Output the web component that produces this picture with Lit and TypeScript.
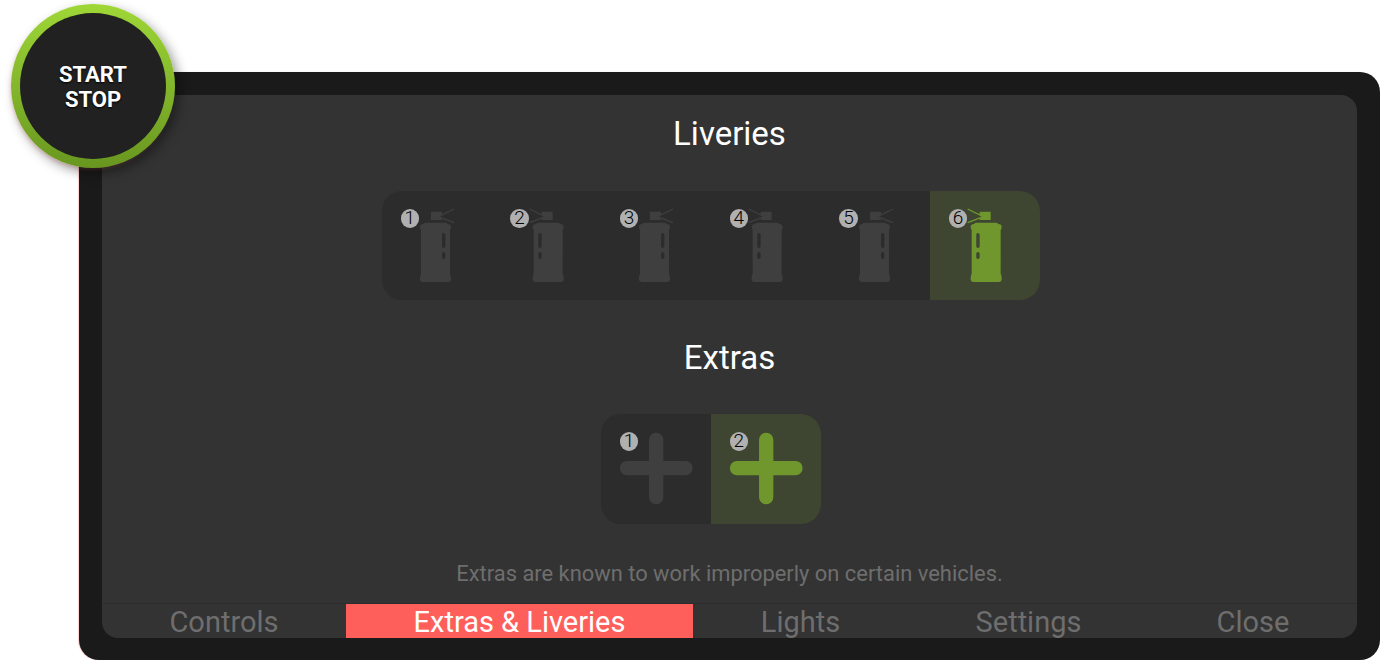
import { LitElement, html, css, svg } from "lit";
import { customElement } from "lit/decorators.js";

const can = (flip: boolean) => svg`
  <g transform=${flip ? "translate(109.67 0) scale(-1 1)" : ""}>
    <path class="fill" d="M49 20.700h11v3l-3 2 3 2v1.300h-11z"/>
    <path class="line" d="M56.500 25.700 72 18M56.500 25.700 72 31.700"/>
    <path class="fill" fill-rule="evenodd" d="M44 31.700H63Q65 31.700 65.500 33Q69 33 69 36Q69 38 68 39V83Q69 84 69 87V88Q69 91 66 91H41Q38 91 38 88V87Q38 84 39 83V39Q38 38 38 36Q38 33 41.500 33Q42 31.700 44 31.700ZM61.700 42a1.700 1.700 0 0 0-1.700 1.700v11.600a1.700 1.700 0 0 0 3.400 0v-11.600a1.700 1.700 0 0 0-1.700-1.700zM61.700 61a1.700 1.700 0 0 0-1.700 1.700v3.600a1.700 1.700 0 0 0 3.400 0v-3.600a1.700 1.700 0 0 0-1.700-1.700z"/>
  </g>`;

const plus = svg`<path class="fill" d="M55.200 18.700a7.150 7.150 0 0 1 7.150 7.150V47H84.500a7.150 7.150 0 0 1 0 14.300H62.350v21.850a7.150 7.150 0 0 1-14.300 0V61.300H26a7.150 7.150 0 0 1 0-14.300H48.050V25.850a7.150 7.150 0 0 1 7.150-7.150z"/>`;

const TABS = [
  { label: "Controls", width: 244 },
  { label: "Extras & Liveries", width: 347, active: true },
  { label: "Lights", width: 215 },
  { label: "Settings", width: 241 },
  { label: "Close", width: 208 },
];

@customElement("app-root")
export class AppRoot extends LitElement {
  static styles = css`
    :host {
      display: block;
      position: relative;
      width: 1380px;
      height: 660px;
      padding: 72px 0 0 79px;
      box-sizing: border-box;
      background: #fff;
      font-family: Roboto, "Liberation Sans", sans-serif;
      overflow: hidden;
    }
    .frame {
      width: 1301px;
      height: 588px;
      box-sizing: border-box;
      padding: 23px 23px 22px 23px;
      background: #1a1a1a;
      border-radius: 20px;
      box-shadow: -1px 0 1px rgba(255, 120, 120, 0.35);
    }
    .panel {
      height: 100%;
      display: flex;
      flex-direction: column;
      align-items: center;
      background: #333;
      border-radius: 16px;
      overflow: hidden;
    }
    h2 {
      margin: 0;
      font-size: 33px;
      font-weight: 400;
      line-height: 36px;
      color: #fff;
    }
    .t1 { margin-top: 21px; }
    .t2 { margin-top: 40px; }
    .group {
      display: flex;
      margin: 39px 37px 0 0;
      background: #2c2c2c;
      border-radius: 20px;
      overflow: hidden;
    }
    .t2 + .group { margin-top: 38px; }
    .cell {
      position: relative;
      width: 109.67px;
      height: 109px;
      --ic: #3f3f3f;
    }
    .t2 + .group .cell { height: 110px; }
    .cell.on {
      background: #3e4632;
      --ic: #6f972d;
    }
    .cell svg {
      display: block;
      width: 109.67px;
      height: 109px;
    }
    .fill { fill: var(--ic); }
    .line { fill: none; stroke: var(--ic); stroke-width: 1.300; }
    .num {
      position: absolute;
      left: 18.500px;
      top: 18px;
      width: 18.500px;
      height: 18.500px;
      border-radius: 50%;
      background: #b0b0b0;
      color: #000;
      font-size: 19px;
      font-weight: 300;
      line-height: 18.500px;
      text-align: center;
    }
    .note {
      margin-top: 38px;
      font-size: 21.900px;
      line-height: 24px;
      color: #6e6e6e;
    }
    .tabs {
      margin-top: auto;
      align-self: stretch;
      display: flex;
      height: 35px;
      box-sizing: border-box;
      border-top: 1px solid #2d2d2d;
    }
    .tab {
      text-align: center;
      font-size: 29px;
      line-height: 36px;
      color: #6e6e6e;
    }
    .tab.on {
      background: #ff5f5a;
      color: #fff;
    }
    .start {
      position: absolute;
      left: 11px;
      top: 4px;
      width: 164px;
      height: 164px;
      box-sizing: border-box;
      padding: 9px;
      border-radius: 50%;
      background: linear-gradient(180deg, #9fd737 0%, #689620 100%);
      box-shadow: 4px 5px 12px rgba(0, 0, 0, 0.4), -1px 2px 3px rgba(255, 110, 110, 0.2);
    }
    .start div {
      height: 100%;
      display: flex;
      flex-direction: column;
      align-items: center;
      justify-content: center;
      padding-top: 2px;
      box-sizing: border-box;
      border-radius: 50%;
      background: #212121;
      color: #fff;
      font-size: 22px;
      font-weight: 700;
      line-height: 25px;
      text-shadow: 0 1px 2px #000;
    }
  `;

  private cell(n: number, on: boolean, icon: unknown) {
    return html`<div class="cell ${on ? "on" : ""}">
      <svg viewBox="0 0 109.670 109" aria-hidden="true">${icon}</svg>
      <span class="num">${n}</span>
    </div>`;
  }

  render() {
    return html`
      <div class="frame">
        <div class="panel">
          <h2 class="t1">Liveries</h2>
          <div class="group">
            ${[1, 2, 3, 4, 5, 6].map((n) => this.cell(n, n === 6, can(n % 2 === 0)))}
          </div>
          <h2 class="t2">Extras</h2>
          <div class="group">
            ${[1, 2].map((n) => this.cell(n, n === 2, plus))}
          </div>
          <div class="note">Extras are known to work improperly on certain vehicles.</div>
          <div class="tabs">
            ${TABS.map(
              (t) => html`<div class="tab ${t.active ? "on" : ""}" style="width:${t.width}px">${t.label}</div>`
            )}
          </div>
        </div>
      </div>
      <div class="start"><div><span>START</span><span>STOP</span></div></div>
    `;
  }
}
